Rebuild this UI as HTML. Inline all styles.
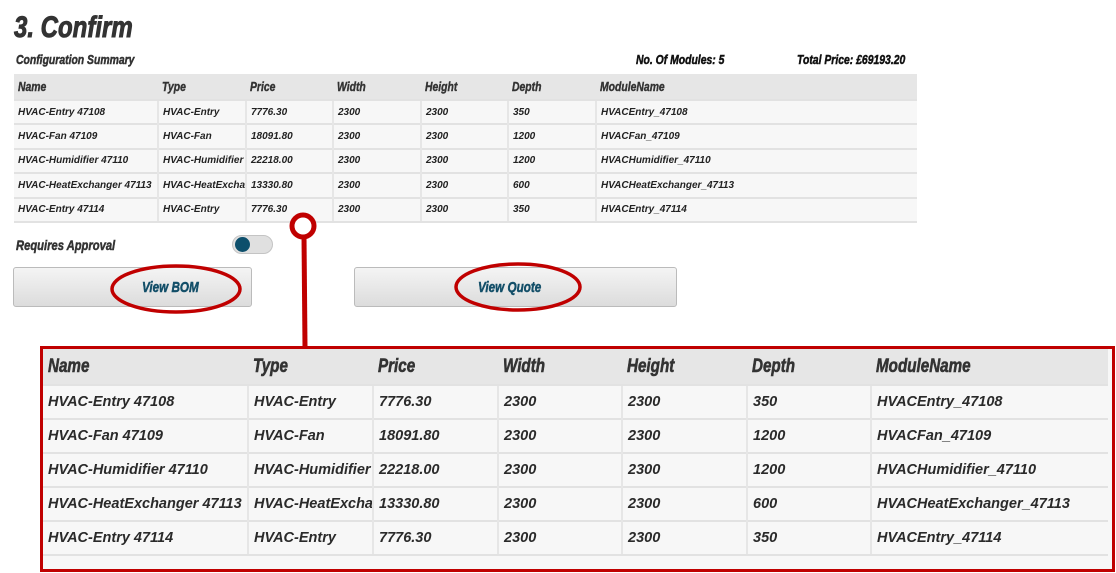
<!DOCTYPE html>
<html><head><meta charset="utf-8"><style>
*{margin:0;padding:0;box-sizing:border-box}
body{width:1116px;height:573px;background:#fff;position:relative;overflow:hidden;font-family:"Liberation Sans",sans-serif;color:#222}
.cond{font-weight:bold;font-style:italic;display:inline-block;transform-origin:left center;white-space:nowrap;-webkit-text-stroke:0.5px currentColor}
.abs{position:absolute}
table{border-collapse:collapse;position:absolute;table-layout:fixed}
td,th{text-align:left;white-space:nowrap;overflow:hidden;font-style:italic}
.s th{height:26px;background:#e6e6e6;padding-left:4px;font-size:13px}
.s td{height:24.4px;background:#f7f7f7;border-top:2px solid #e2e2e2;border-left:2px solid #e6e6e6;padding-left:4px;font-size:10px;font-weight:bold;color:#222}
.s td:first-child{border-left:none}
.b th{height:36px;background:#e6e6e6;padding-left:5px;font-size:19px}
.b td{height:34px;background:#f7f7f7;border-top:2px solid #e2e2e2;border-left:2px solid #e6e6e6;padding-left:5px;font-size:14.5px;font-weight:bold;color:#2a2a2a}
.b td:first-child{border-left:none}
th span{display:inline-block;transform:scaleX(.8);transform-origin:left;font-weight:bold;color:#333;-webkit-text-stroke:0.6px #333}
.s th span{-webkit-text-stroke:0.4px #333}
.btn{position:absolute;border:1px solid #bbb;border-radius:3px;background:linear-gradient(#f4f4f4,#dcdcdc);text-align:center}
</style></head><body>
<div class="abs cond" style="left:14px;top:11px;font-size:30px;color:#333;transform:scaleX(.8);-webkit-text-stroke:1px #333">3. Confirm</div>
<div class="abs cond" style="left:16px;top:52px;font-size:13px;color:#333;transform:scaleX(.8)">Configuration Summary</div>
<div class="abs cond" style="left:636px;top:52px;font-size:13px;color:#111;transform:scaleX(.8)">No. Of Modules: 5</div>
<div class="abs cond" style="left:797px;top:52px;font-size:13px;color:#111;transform:scaleX(.8)">Total Price: £69193.20</div>

<table class="s" style="left:14px;top:74px;width:903px">
<colgroup><col style="width:144px"><col style="width:88px"><col style="width:87px"><col style="width:88px"><col style="width:87px"><col style="width:88px"><col></colgroup>
<tr><th><span>Name</span></th><th><span>Type</span></th><th><span>Price</span></th><th><span>Width</span></th><th><span>Height</span></th><th><span>Depth</span></th><th><span>ModuleName</span></th></tr>
<tr><td>HVAC-Entry 47108</td><td>HVAC-Entry</td><td>7776.30</td><td>2300</td><td>2300</td><td>350</td><td>HVACEntry_47108</td></tr>
<tr><td>HVAC-Fan 47109</td><td>HVAC-Fan</td><td>18091.80</td><td>2300</td><td>2300</td><td>1200</td><td>HVACFan_47109</td></tr>
<tr><td>HVAC-Humidifier 47110</td><td>HVAC-Humidifier</td><td>22218.00</td><td>2300</td><td>2300</td><td>1200</td><td>HVACHumidifier_47110</td></tr>
<tr><td>HVAC-HeatExchanger 47113</td><td>HVAC-HeatExchanger</td><td>13330.80</td><td>2300</td><td>2300</td><td>600</td><td>HVACHeatExchanger_47113</td></tr>
<tr><td style="border-bottom:2px solid #e2e2e2">HVAC-Entry 47114</td><td style="border-bottom:2px solid #e2e2e2">HVAC-Entry</td><td style="border-bottom:2px solid #e2e2e2">7776.30</td><td style="border-bottom:2px solid #e2e2e2">2300</td><td style="border-bottom:2px solid #e2e2e2">2300</td><td style="border-bottom:2px solid #e2e2e2">350</td><td style="border-bottom:2px solid #e2e2e2">HVACEntry_47114</td></tr>
</table>

<div class="abs cond" style="left:16px;top:237px;font-size:14px;color:#333;transform:scaleX(.8)">Requires Approval</div>
<div class="abs" style="left:232px;top:235px;width:41px;height:19px;border-radius:10px;background:#e0e0e0;border:1px solid #c4c4c4"></div>
<div class="abs" style="left:235px;top:237px;width:15px;height:15px;border-radius:50%;background:#0d4f6c"></div>

<div class="btn" style="left:13px;top:267px;width:239px;height:40px"></div>
<div class="btn" style="left:354px;top:267px;width:323px;height:40px"></div>
<div class="abs cond" style="left:142px;top:279px;font-size:15px;color:#124e68;transform:scaleX(.78)">View BOM</div>
<div class="abs cond" style="left:478px;top:279px;font-size:15px;color:#124e68;transform:scaleX(.78)">View Quote</div>

<div class="abs" style="left:40px;top:346px;width:1075px;height:226px;border:3px solid #c00000;background:#f7f7f7"></div>
<table class="b" style="left:43px;top:349px;width:1065px">
<colgroup><col style="width:205px"><col style="width:125px"><col style="width:125px"><col style="width:124px"><col style="width:125px"><col style="width:124px"><col></colgroup>
<tr><th><span>Name</span></th><th><span>Type</span></th><th><span>Price</span></th><th><span>Width</span></th><th><span>Height</span></th><th><span>Depth</span></th><th><span>ModuleName</span></th></tr>
<tr><td>HVAC-Entry 47108</td><td>HVAC-Entry</td><td>7776.30</td><td>2300</td><td>2300</td><td>350</td><td>HVACEntry_47108</td></tr>
<tr><td>HVAC-Fan 47109</td><td>HVAC-Fan</td><td>18091.80</td><td>2300</td><td>2300</td><td>1200</td><td>HVACFan_47109</td></tr>
<tr><td>HVAC-Humidifier 47110</td><td>HVAC-Humidifier</td><td>22218.00</td><td>2300</td><td>2300</td><td>1200</td><td>HVACHumidifier_47110</td></tr>
<tr><td>HVAC-HeatExchanger 47113</td><td>HVAC-HeatExchanger</td><td>13330.80</td><td>2300</td><td>2300</td><td>600</td><td>HVACHeatExchanger_47113</td></tr>
<tr><td style="border-bottom:2px solid #e2e2e2">HVAC-Entry 47114</td><td style="border-bottom:2px solid #e2e2e2">HVAC-Entry</td><td style="border-bottom:2px solid #e2e2e2">7776.30</td><td style="border-bottom:2px solid #e2e2e2">2300</td><td style="border-bottom:2px solid #e2e2e2">2300</td><td style="border-bottom:2px solid #e2e2e2">350</td><td style="border-bottom:2px solid #e2e2e2">HVACEntry_47114</td></tr>
</table>

<svg class="abs" style="left:0;top:0" width="1116" height="573">
<ellipse cx="176" cy="289" rx="64" ry="23" fill="none" stroke="#c00000" stroke-width="3.5"/>
<ellipse cx="518" cy="287" rx="62" ry="23" fill="none" stroke="#c00000" stroke-width="3.5"/>
<line x1="304" y1="236" x2="305" y2="347" stroke="#c00000" stroke-width="5"/>
<circle cx="303" cy="226" r="11" fill="#fff" stroke="#c00000" stroke-width="5"/>
</svg>
</body></html>
